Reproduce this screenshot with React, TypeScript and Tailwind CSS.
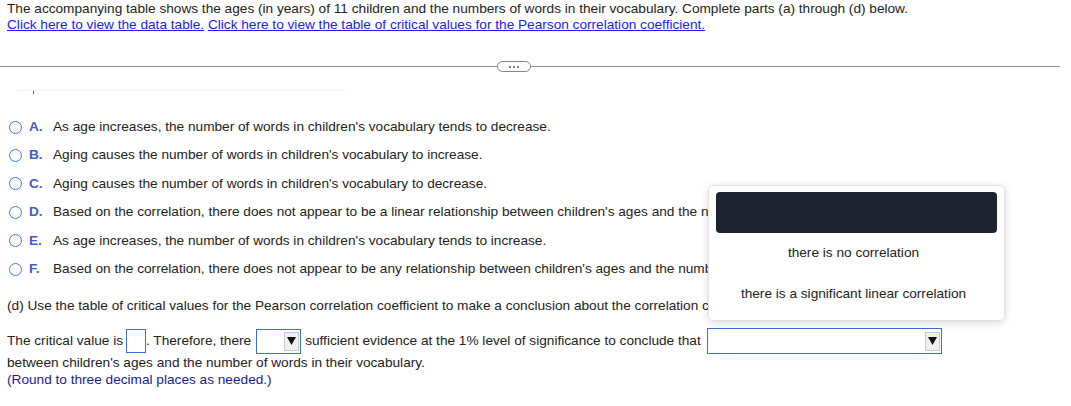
import React from "react";

const options: [string, string][] = [
  ["A.", "As age increases, the number of words in children's vocabulary tends to decrease."],
  ["B.", "Aging causes the number of words in children's vocabulary to increase."],
  ["C.", "Aging causes the number of words in children's vocabulary to decrease."],
  ["D.", "Based on the correlation, there does not appear to be a linear relationship between children's ages and the number of words in their vocabulary."],
  ["E.", "As age increases, the number of words in children's vocabulary tends to increase."],
  ["F.", "Based on the correlation, there does not appear to be any relationship between children's ages and the number of words in their vocabulary."],
];

function Arrow() {
  return (
    <span className="flex items-center justify-center w-[15px] h-[19px] bg-[#f0f0f0] border border-[#c8c8c8] mr-[1px]">
      <svg width="9" height="8" viewBox="0 0 9 8">
        <path d="M0 0 L9 0 L4.5 8 Z" fill="#111" />
      </svg>
    </span>
  );
}

export default function App() {
  return (
    <div className="relative w-[1071px] h-[406px] overflow-hidden bg-white text-[13.65px] text-[#222] font-['Liberation_Sans',Arial,sans-serif]">
      <div className="pl-[7px] pt-[1px] leading-[16px]">
        <div className="whitespace-nowrap">
          The accompanying table shows the ages (in years) of 11 children and the numbers of words in their vocabulary. Complete parts (a) through (d) below.
        </div>
        <div className="whitespace-nowrap text-[#1a1aff]">
          <span className="underline">Click here to view the data table.</span>{" "}
          <span className="underline">Click here to view the table of critical values for the Pearson correlation coefficient.</span>
        </div>
      </div>

      <div className="relative mt-[33px] h-[1px] w-[1060px] bg-[#8a949e]">
        <div className="absolute left-[497px] top-[-5px] w-[34px] h-[11px] rounded-full border border-[#7d8893] bg-white flex items-center justify-center gap-[2px]">
          <span className="w-[2px] h-[2px] bg-[#556] rounded-full" />
          <span className="w-[2px] h-[2px] bg-[#556] rounded-full" />
          <span className="w-[2px] h-[2px] bg-[#556] rounded-full" />
        </div>
      </div>

      <div className="mt-[23px] ml-[18px] w-[330px] h-[1px] border-t border-dotted border-[#e4e4e4] relative">
        <span className="absolute left-[15px] top-[0px] w-[1px] h-[3px] bg-[#555]" />
      </div>

      <div className="mt-[22px] flex flex-col">
        {options.map(([l, t]) => (
          <div key={l} className="h-[28.4px] flex items-center whitespace-nowrap">
            <span className="ml-[9px] w-[13px] h-[13px] rounded-full border-[1.5px] border-[#4a78d6] bg-white shrink-0" />
            <span className="ml-[7px] w-[24px] font-bold text-[#3d5fc0]">{l}</span>
            <span>{t}</span>
          </div>
        ))}
      </div>

      <div className="pl-[7px] mt-[15px] leading-[16px] whitespace-nowrap">
        (d) Use the table of critical values for the Pearson correlation coefficient to make a conclusion about the correlation coefficient.
      </div>

      <div className="pl-[7px] mt-[14px] flex items-center whitespace-nowrap h-[26px]">
        <span>The critical value is</span>
        <span className="ml-[3px] w-[20px] h-[24px] border border-[#3a6fd8] bg-white" />
        <span>. Therefore, there</span>
        <span className="ml-[5px] w-[45px] h-[25px] border border-[#3a6fd8] bg-white flex items-center justify-end">
          <Arrow />
        </span>
        <span className="ml-[4px]">sufficient evidence at the 1% level of significance to conclude that</span>
        <span className="ml-[6px] w-[235px] h-[26px] border border-[#3a6fd8] bg-white flex items-center justify-end">
          <Arrow />
        </span>
      </div>
      <div className="pl-[7px] leading-[16px] whitespace-nowrap mt-[1px]">
        between children's ages and the number of words in their vocabulary.
      </div>
      <div className="pl-[7px] leading-[16px] mt-[1px] whitespace-nowrap text-[#1a1a99]">
        (Round to three decimal places as needed.)
      </div>

      <div className="absolute left-[708px] top-[185px] w-[297px] h-[136px] bg-white rounded-[5px] border border-[#e2e2e2] shadow-[0_2px_8px_rgba(0,0,0,0.15)] flex flex-col items-center pt-[6px] px-[7px]">
        <div className="w-full h-[41px] rounded-[4px] bg-[#1e2430]" />
        <div className="mt-[12px] mr-[6px] leading-[16px] text-[#222]">there is no correlation</div>
        <div className="mt-[25px] mr-[6px] leading-[16px] text-[#222]">there is a significant linear correlation</div>
      </div>
    </div>
  );
}
